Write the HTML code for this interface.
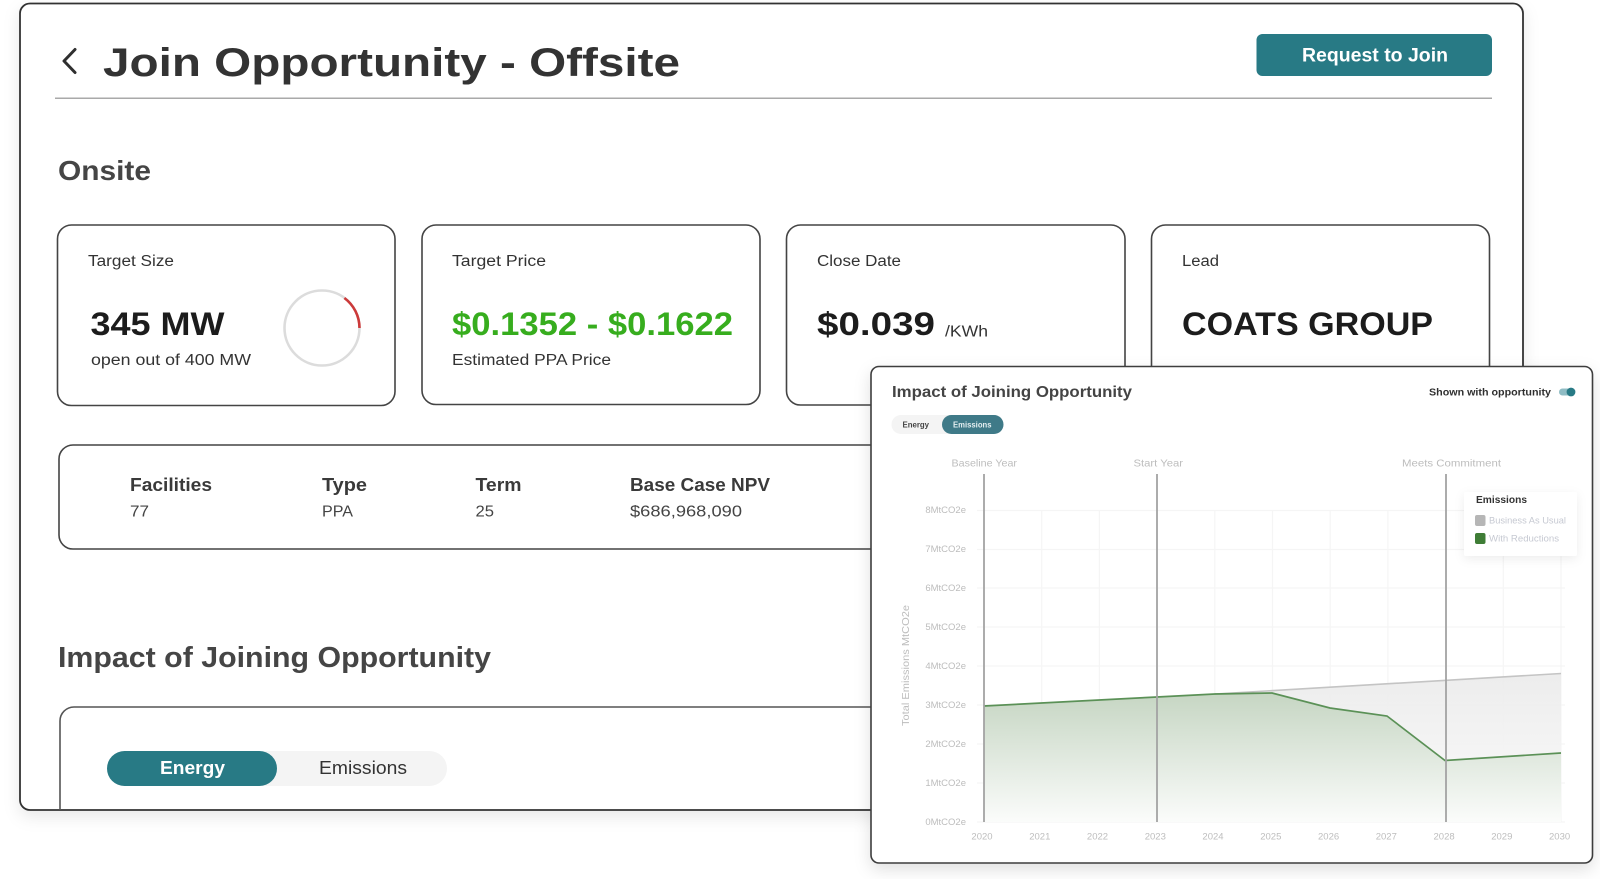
<!DOCTYPE html>
<html><head><meta charset="utf-8"><title>Join Opportunity - Offsite</title>
<style>
html,body{margin:0;padding:0;background:#fff;width:1600px;height:879px;overflow:hidden}
svg{display:block;position:absolute;left:0;top:0;filter:blur(.3px)}
text{font-family:"Liberation Sans",sans-serif}
.b{font-weight:700}
.card{fill:#fff;stroke:#444;stroke-width:1.6}
.gl{stroke:#f5f5f5;stroke-width:1.2}
.vl{stroke:#a3a3a3;stroke-width:1.8}
.yl{font-size:9.5px;fill:#bdbdbd}
.xl{font-size:9.5px;fill:#bdbdbd}
.hd{font-size:10.5px;fill:#bdbdbd}
.lab{font-size:15.5px;fill:#333}
.big{font-size:32px;font-weight:700;fill:#1c1c1c}
.sub{font-size:15.5px;fill:#333}
.th{font-size:18.5px;font-weight:700;fill:#3a3a3a}
.td{font-size:16px;fill:#444}
</style></head>
<body>
<svg width="1600" height="879" viewBox="0 0 1600 879" xmlns="http://www.w3.org/2000/svg">
<defs>
<filter id="s1" x="-5%" y="-5%" width="110%" height="112%"><feDropShadow dx="0" dy="6" stdDeviation="8" flood-color="#000" flood-opacity=".09"/></filter>
<filter id="s2" x="-5%" y="-5%" width="110%" height="110%"><feDropShadow dx="0" dy="6" stdDeviation="8" flood-color="#000" flood-opacity=".12"/></filter>
<filter id="s3" x="-20%" y="-20%" width="140%" height="150%"><feDropShadow dx="0" dy="3" stdDeviation="5" flood-color="#000" flood-opacity=".07"/></filter>
<linearGradient id="gg" x1="0" y1="0" x2="0" y2="1"><stop offset="0" stop-color="#ebebeb"/><stop offset="1" stop-color="#fbfbfb"/></linearGradient>
<linearGradient id="gr" gradientUnits="userSpaceOnUse" x1="0" y1="693" x2="0" y2="822"><stop offset="0" stop-color="#c6d6c3"/><stop offset="1" stop-color="#fbfcfb"/></linearGradient>
</defs>

<!-- Main card -->
<rect x="20" y="3.5" width="1503" height="806.5" rx="10" fill="#fff" stroke="#333" stroke-width="1.8" filter="url(#s1)"/>
<path d="M75 49.5 L64 61 L75 72.5" fill="none" stroke="#2f2f2f" stroke-width="3" stroke-linecap="round" stroke-linejoin="round"/>
<text x="103" y="76" font-size="40" class="b" fill="#333" textLength="577" lengthAdjust="spacingAndGlyphs">Join Opportunity - Offsite</text>
<rect x="1256.5" y="34" width="235.5" height="42" rx="6" fill="#287a85"/>
<text x="1302" y="61.5" font-size="19" class="b" fill="#fff" textLength="146" lengthAdjust="spacingAndGlyphs">Request to Join</text>
<rect x="55" y="97.5" width="1437" height="1.5" fill="#a9a9a9"/>
<text x="58" y="180" font-size="28" class="b" fill="#454545" textLength="93" lengthAdjust="spacingAndGlyphs">Onsite</text>

<!-- KPI cards -->
<rect class="card" x="57.5" y="225" width="337.5" height="180.5" rx="14"/>
<text class="lab" x="88" y="266" textLength="86" lengthAdjust="spacingAndGlyphs">Target Size</text>
<text class="big" x="90.5" y="335" textLength="134" lengthAdjust="spacingAndGlyphs">345 MW</text>
<text class="sub" x="91" y="365" textLength="160" lengthAdjust="spacingAndGlyphs">open out of 400 MW</text>
<circle cx="322" cy="328" r="37.5" fill="none" stroke="#dcdcdc" stroke-width="2.6"/>
<path d="M344.4 298 A37.5 37.5 0 0 1 359.5 328" fill="none" stroke="#cc3a3a" stroke-width="2.6"/>

<rect class="card" x="422" y="225" width="338" height="179.5" rx="14"/>
<text class="lab" x="452" y="266" textLength="94" lengthAdjust="spacingAndGlyphs">Target Price</text>
<text class="big" style="fill:#37ad1e" x="452" y="335" textLength="281" lengthAdjust="spacingAndGlyphs">$0.1352 - $0.1622</text>
<text class="sub" x="452" y="365" textLength="159" lengthAdjust="spacingAndGlyphs">Estimated PPA Price</text>

<rect class="card" x="786.5" y="225" width="338.5" height="180" rx="14"/>
<text class="lab" x="817" y="266" textLength="84" lengthAdjust="spacingAndGlyphs">Close Date</text>
<text class="big" x="817" y="335" textLength="118" lengthAdjust="spacingAndGlyphs">$0.039</text>
<text class="sub" x="945" y="336.5" textLength="43" lengthAdjust="spacingAndGlyphs">/KWh</text>

<rect class="card" x="1151.5" y="225" width="338" height="180" rx="14"/>
<text class="lab" x="1182" y="266" textLength="37" lengthAdjust="spacingAndGlyphs">Lead</text>
<text class="big" x="1182" y="335" textLength="251" lengthAdjust="spacingAndGlyphs">COATS GROUP</text>

<!-- Details row -->
<rect class="card" x="59" y="445" width="1100" height="104" rx="14"/>
<text class="th" x="130" y="491" textLength="82" lengthAdjust="spacingAndGlyphs">Facilities</text>
<text class="th" x="322" y="491" textLength="45" lengthAdjust="spacingAndGlyphs">Type</text>
<text class="th" x="475.5" y="491" textLength="46" lengthAdjust="spacingAndGlyphs">Term</text>
<text class="th" x="630" y="491" textLength="140" lengthAdjust="spacingAndGlyphs">Base Case NPV</text>
<text class="td" x="130" y="516.5" textLength="19" lengthAdjust="spacingAndGlyphs">77</text>
<text class="td" x="322" y="516.5" textLength="31" lengthAdjust="spacingAndGlyphs">PPA</text>
<text class="td" x="475.5" y="516.5" textLength="18.5" lengthAdjust="spacingAndGlyphs">25</text>
<text class="td" x="630" y="516.5" textLength="112" lengthAdjust="spacingAndGlyphs">$686,968,090</text>

<text x="58" y="667" font-size="28.5" class="b" fill="#454545" textLength="433" lengthAdjust="spacingAndGlyphs">Impact of Joining Opportunity</text>

<!-- Lower card -->
<path d="M60 810 V721 A14 14 0 0 1 74 707 H880" fill="none" stroke="#555" stroke-width="1.6"/>
<rect x="107" y="751" width="340" height="35" rx="17.5" fill="#f4f4f4"/>
<rect x="107" y="751" width="170" height="35" rx="17.5" fill="#287a85"/>
<text x="160" y="774" font-size="18" class="b" fill="#fff" textLength="65" lengthAdjust="spacingAndGlyphs">Energy</text>
<text x="319" y="774" font-size="18" fill="#333" textLength="88" lengthAdjust="spacingAndGlyphs">Emissions</text>

<!-- Overlay card -->
<rect x="871" y="366.5" width="721.5" height="496.5" rx="8" fill="#fff" stroke="#3c3c3c" stroke-width="1.6" filter="url(#s2)"/>
<text x="892" y="397" font-size="16" class="b" fill="#444" textLength="240" lengthAdjust="spacingAndGlyphs">Impact of Joining Opportunity</text>
<text x="1429" y="395.5" font-size="10.5" class="b" fill="#2f2f2f" textLength="122" lengthAdjust="spacingAndGlyphs">Shown with opportunity</text>
<rect x="1559" y="388.5" width="16" height="7" rx="3.5" fill="#8fbcc4"/>
<circle cx="1571" cy="392" r="4.4" fill="#287a85"/>

<rect x="891.5" y="415" width="112" height="19" rx="9.5" fill="#f4f4f4"/>
<rect x="942" y="415" width="61.5" height="19" rx="9.5" fill="#3f7a88"/>
<text x="902.5" y="427.5" font-size="8" class="b" fill="#444" textLength="26.5" lengthAdjust="spacingAndGlyphs">Energy</text>
<text x="953" y="427.5" font-size="8" class="b" fill="#e6f0f2" textLength="38.5" lengthAdjust="spacingAndGlyphs">Emissions</text>

<text class="hd" x="951.5" y="466.5" textLength="65.5" lengthAdjust="spacingAndGlyphs">Baseline Year</text>
<text class="hd" x="1133.5" y="466.5" textLength="49.5" lengthAdjust="spacingAndGlyphs">Start Year</text>
<text class="hd" x="1402" y="466.5" textLength="99" lengthAdjust="spacingAndGlyphs">Meets Commitment</text>

<!-- grid -->
<g>
<line class="gl" x1="977" x2="1565" y1="510.5" y2="510.5"/>
<line class="gl" x1="977" x2="1565" y1="549.5" y2="549.5"/>
<line class="gl" x1="977" x2="1565" y1="588" y2="588"/>
<line class="gl" x1="977" x2="1565" y1="627" y2="627"/>
<line class="gl" x1="977" x2="1565" y1="666" y2="666"/>
<line class="gl" x1="977" x2="1565" y1="705" y2="705"/>
<line class="gl" x1="977" x2="1565" y1="744" y2="744"/>
<line class="gl" x1="977" x2="1565" y1="783" y2="783"/>
<line class="gl" x1="977" x2="1565" y1="822" y2="822"/>
<line class="gl" x1="1041.7" x2="1041.7" y1="510" y2="822"/>
<line class="gl" x1="1099.4" x2="1099.4" y1="510" y2="822"/>
<line class="gl" x1="1214.8" x2="1214.8" y1="510" y2="822"/>
<line class="gl" x1="1272.5" x2="1272.5" y1="510" y2="822"/>
<line class="gl" x1="1330.2" x2="1330.2" y1="510" y2="822"/>
<line class="gl" x1="1387.9" x2="1387.9" y1="510" y2="822"/>
<line class="gl" x1="1503.3" x2="1503.3" y1="510" y2="822"/>
<line class="gl" x1="1561" x2="1561" y1="510" y2="822"/>
</g>

<!-- areas -->
<path d="M984 706 L1157 697 L1215 694 L1561 673.5 V822 H984 Z" fill="url(#gg)" opacity=".92"/>
<path d="M984 706 L1157 697 L1215 694 L1272 693 L1330 708 L1387 716 L1445 760.5 L1561 753 V822 H984 Z" fill="url(#gr)"/>
<path d="M1215 694 L1561 673.5" fill="none" stroke="#c4c4c4" stroke-width="1.6"/>
<path d="M984 706 L1157 697 L1215 694 L1272 693 L1330 708 L1387 716 L1445 760.5 L1561 753" fill="none" stroke="#5b9157" stroke-width="1.7"/>

<line class="vl" x1="984" x2="984" y1="474" y2="822"/>
<line class="vl" x1="1157" x2="1157" y1="474" y2="822"/>
<line class="vl" x1="1446" x2="1446" y1="474" y2="822"/>

<!-- y labels -->
<g text-anchor="end">
<text class="yl" x="966" y="513">8MtCO2e</text>
<text class="yl" x="966" y="552">7MtCO2e</text>
<text class="yl" x="966" y="591">6MtCO2e</text>
<text class="yl" x="966" y="630">5MtCO2e</text>
<text class="yl" x="966" y="669">4MtCO2e</text>
<text class="yl" x="966" y="708">3MtCO2e</text>
<text class="yl" x="966" y="747">2MtCO2e</text>
<text class="yl" x="966" y="786">1MtCO2e</text>
<text class="yl" x="966" y="825">0MtCO2e</text>
</g>
<text transform="translate(909 726) rotate(-90)" font-size="10" fill="#bdbdbd" textLength="121" lengthAdjust="spacingAndGlyphs">Total Emissions MtCO2e</text>

<!-- x labels -->
<g text-anchor="middle">
<text class="xl" x="982" y="839.5">2020</text>
<text class="xl" x="1039.8" y="839.5">2021</text>
<text class="xl" x="1097.5" y="839.5">2022</text>
<text class="xl" x="1155.3" y="839.5">2023</text>
<text class="xl" x="1213" y="839.5">2024</text>
<text class="xl" x="1270.8" y="839.5">2025</text>
<text class="xl" x="1328.6" y="839.5">2026</text>
<text class="xl" x="1386.3" y="839.5">2027</text>
<text class="xl" x="1444.1" y="839.5">2028</text>
<text class="xl" x="1501.8" y="839.5">2029</text>
<text class="xl" x="1559.6" y="839.5">2030</text>
</g>

<!-- Legend -->
<rect x="1464" y="492" width="113" height="64" rx="2" fill="#fff" filter="url(#s3)"/>
<text x="1476" y="503" font-size="10" class="b" fill="#333" textLength="51" lengthAdjust="spacingAndGlyphs">Emissions</text>
<rect x="1475" y="515" width="10.5" height="11" rx="2" fill="#b6b6b6"/>
<text x="1489" y="523.5" font-size="9.5" fill="#c6c9d2" textLength="77" lengthAdjust="spacingAndGlyphs">Business As Usual</text>
<rect x="1475" y="533" width="10.5" height="11" rx="2" fill="#3f7d36"/>
<text x="1489" y="541.5" font-size="9.5" fill="#c6c9d2" textLength="70" lengthAdjust="spacingAndGlyphs">With Reductions</text>
</svg>
</body></html>
